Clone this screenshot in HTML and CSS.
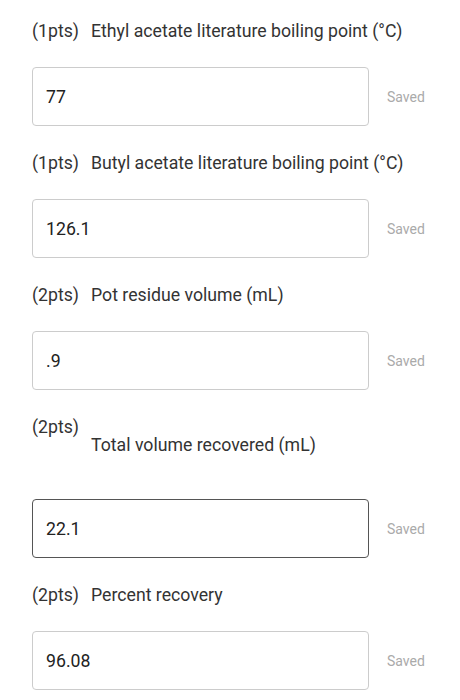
FILE: index.html
```html
<!DOCTYPE html>
<html>
<head>
<meta charset="utf-8">
<link rel="stylesheet" href="styles.css">
</head>
<body>
<div class="quiz">
  <div class="question">
    <div class="label"><span class="pts">(1pts)</span><span class="text">Ethyl acetate literature boiling point (°C)</span></div>
    <div class="row"><div class="field">77</div><span class="saved">Saved</span></div>
  </div>
  <div class="question">
    <div class="label"><span class="pts">(1pts)</span><span class="text">Butyl acetate literature boiling point (°C)</span></div>
    <div class="row"><div class="field">126.1</div><span class="saved">Saved</span></div>
  </div>
  <div class="question">
    <div class="label"><span class="pts">(2pts)</span><span class="text">Pot residue volume (mL)</span></div>
    <div class="row"><div class="field">.9</div><span class="saved">Saved</span></div>
  </div>
  <div class="question">
    <div class="label"><span class="pts">(2pts)</span><span class="text text-block">Total volume recovered (mL)</span></div>
    <div class="row"><div class="field field-active">22.1</div><span class="saved">Saved</span></div>
  </div>
  <div class="question">
    <div class="label"><span class="pts">(2pts)</span><span class="text">Percent recovery</span></div>
    <div class="row"><div class="field">96.08</div><span class="saved">Saved</span></div>
  </div>
</div>
</body>
</html>
```
FILE: styles.css
```css
html, body {
  margin: 0;
  padding: 0;
  background: #ffffff;
}
body {
  font-family: Roboto, "Noto Sans", sans-serif;
  color: #333333;
}
.quiz {
  padding: 21px 0 0 32px;
  display: flex;
  flex-direction: column;
}
.question {
  display: flex;
  flex-direction: column;
  padding-bottom: 27px;
}
.label {
  display: flex;
  align-items: flex-start;
  font-size: 17.7px;
  line-height: 20px;
  color: #333333;
  margin-bottom: 26px;
}
.pts {
  width: 59px;
  flex: none;
}
.text-block {
  margin-top: 18px;
  margin-bottom: 18px;
}
.row {
  display: flex;
  align-items: center;
}
.field {
  box-sizing: border-box;
  width: 337px;
  height: 59px;
  border: 1px solid #cccccc;
  border-radius: 4px;
  padding-left: 13px;
  display: flex;
  align-items: center;
  font-size: 17.7px;
  color: #222222;
}
.field-active {
  border-color: #555555;
}
.saved {
  margin-left: 18px;
  font-size: 14px;
  color: #aaaaaa;
}
```
